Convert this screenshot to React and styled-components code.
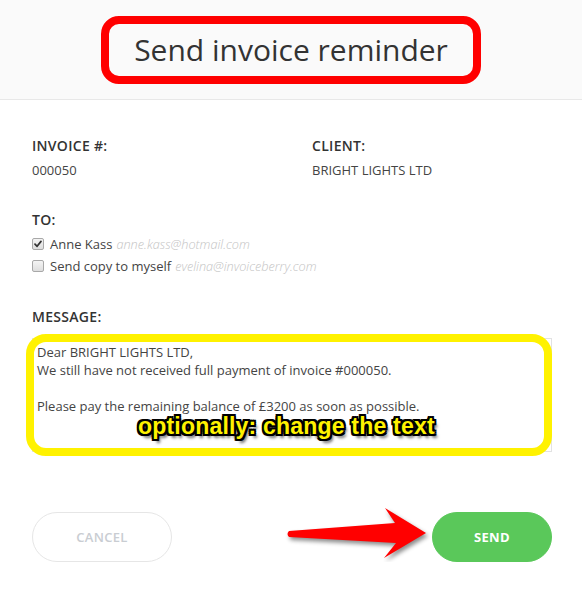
import React from "react";
import styled, { createGlobalStyle } from "styled-components";

const GlobalStyle = createGlobalStyle`
  body {
    margin: 0;
    background: #ffffff;
    font-family: "Open Sans", "DejaVu Sans", sans-serif;
    color: #333333;
  }
`;

const Header = styled.header`
  height: 99px;
  background: #fafafa;
  border-bottom: 1px solid #e8e8e8;
  display: flex;
  align-items: center;
  justify-content: center;
`;

// red annotation frame round the title
const TitleFrame = styled.div`
  box-sizing: border-box;
  width: 380px;
  height: 68px;
  border: 8px solid #ff0000;
  border-radius: 18px;
  display: flex;
  align-items: center;
  justify-content: center;
`;

const Title = styled.h1`
  margin: 0;
  font-size: 30px;
  font-weight: 400;
  color: #333333;
`;

const Content = styled.main`
  padding: 36px 30px 0 32px;
`;

const InfoGrid = styled.div`
  display: grid;
  grid-template-columns: 280px 1fr;
`;

const Label = styled.div`
  font-size: 14px;
  line-height: 20px;
  font-weight: 600;
  letter-spacing: 0.3px;
  color: #333333;
  margin-top: ${(p) => p.$top || 0}px;
`;

const Value = styled.div`
  margin-top: 5px;
  font-size: 13px;
  line-height: 18px;
  color: #444444;
`;

const Recipients = styled.div`
  margin-top: 3px;
`;

const CheckRow = styled.label`
  display: flex;
  align-items: center;
  height: 22px;
  font-size: 13px;
  color: #444444;
`;

const Box = styled.span`
  box-sizing: border-box;
  width: 12px;
  height: 12px;
  margin-right: 6px;
  border: 1px solid #a8a8a8;
  border-radius: 2px;
  background: linear-gradient(#f4f4f4, #dedede);
  display: flex;
  align-items: center;
  justify-content: center;
`;

const Email = styled.span`
  margin-left: 4px;
  font-size: 12.7px;
  font-style: italic;
  font-weight: 300;
  color: #c4c4c4;
`;

const MessageWrap = styled.div`
  position: relative;
  margin-top: 11px;
`;

const MessageBox = styled.textarea`
  display: block;
  box-sizing: border-box;
  width: 520px;
  height: 114px;
  margin: 0;
  padding: 4px 4px;
  border: 1px solid #e2e2e2;
  font-family: "Open Sans", "DejaVu Sans", sans-serif;
  font-size: 13px;
  line-height: 18px;
  color: #444444;
  resize: none;
  overflow: hidden;
  outline: none;
`;

const Highlight = styled.div`
  position: absolute;
  left: -6px;
  top: -4px;
  width: 526px;
  height: 122px;
  box-sizing: border-box;
  border: 8px solid #fff200;
  border-radius: 20px;
  pointer-events: none;
`;

const Note = styled.div`
  position: absolute;
  left: 106px;
  top: 75px;
  font-family: "Liberation Sans", Arial, sans-serif;
  font-size: 23px;
  font-weight: 700;
  letter-spacing: 0.2px;
  color: #fff200;
  text-shadow: -2px -2px 0 #000, 2px -2px 0 #000, -2px 2px 0 #000,
    2px 2px 0 #000, 0 -2px 0 #000, 0 2px 0 #000, -2px 0 0 #000,
    2px 0 0 #000, 3px 4px 3px rgba(0, 0, 0, 0.6);
  white-space: nowrap;
  pointer-events: none;
`;

const ButtonRow = styled.div`
  position: relative;
  margin-top: 60px;
  display: flex;
  justify-content: space-between;
`;

const Button = styled.button`
  height: 50px;
  width: ${(p) => p.$width}px;
  border-radius: 25px;
  border: 1px solid ${(p) => (p.$primary ? "#5ac85a" : "#e6e6e6")};
  background: ${(p) => (p.$primary ? "#5ac85a" : "#ffffff")};
  color: ${(p) => (p.$primary ? "#ffffff" : "#c9cdd2")};
  font-family: "Open Sans", "DejaVu Sans", sans-serif;
  font-size: 13px;
  font-weight: ${(p) => (p.$primary ? 700 : 600)};
  letter-spacing: 0.3px;
  cursor: pointer;
`;

const Arrow = styled.svg`
  position: absolute;
  left: 250px;
  top: -8px;
  filter: drop-shadow(2px 3px 2px rgba(0, 0, 0, 0.45));
  pointer-events: none;
`;

const Check = () => (
  <svg width="8" height="8" viewBox="0 0 8 8">
    <path
      d="M1 4.2 L3.1 6.3 L7 1.4"
      fill="none"
      stroke="#333"
      strokeWidth="1.7"
      strokeLinecap="round"
      strokeLinejoin="round"
    />
  </svg>
);

const message =
  "Dear BRIGHT LIGHTS LTD,\nWe still have not received full payment of invoice #000050.\n\nPlease pay the remaining balance of £3200 as soon as possible.";

export default function App() {
  return (
    <>
      <GlobalStyle />
      <Header>
        <TitleFrame>
          <Title>Send invoice reminder</Title>
        </TitleFrame>
      </Header>
      <Content>
        <InfoGrid>
          <div>
            <Label>INVOICE #:</Label>
            <Value>000050</Value>
          </div>
          <div>
            <Label>CLIENT:</Label>
            <Value>BRIGHT LIGHTS LTD</Value>
          </div>
        </InfoGrid>

        <Label $top={31}>TO:</Label>
        <Recipients>
          <CheckRow>
            <Box>
              <Check />
            </Box>
            Anne Kass<Email>anne.kass@hotmail.com</Email>
          </CheckRow>
          <CheckRow>
            <Box />
            Send copy to myself<Email>evelina@invoiceberry.com</Email>
          </CheckRow>
        </Recipients>

        <Label $top={30}>MESSAGE:</Label>
        <MessageWrap>
          <MessageBox readOnly defaultValue={message} />
          <Highlight />
          <Note>optionally: change the text</Note>
        </MessageWrap>

        <ButtonRow>
          <Button $width={140}>CANCEL</Button>
          <Arrow width="150" height="60" viewBox="0 0 150 60">
            <path
              d="M7 27 L113 19 L103 4 L144 29 L102 54 L114 39 L7 33 Q4 30 7 27 Z"
              fill="#ff0000"
            />
          </Arrow>
          <Button $primary $width={120}>
            SEND
          </Button>
        </ButtonRow>
      </Content>
    </>
  );
}
